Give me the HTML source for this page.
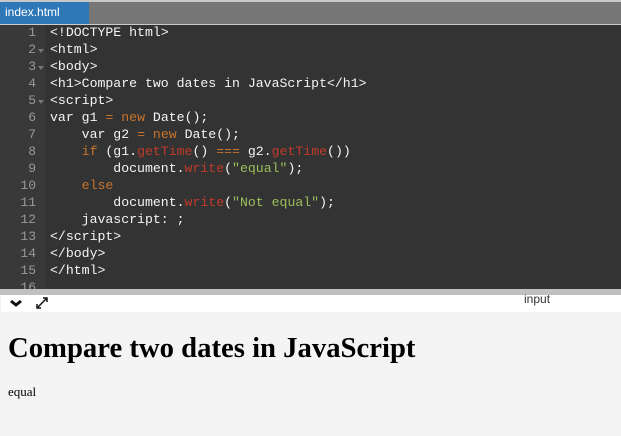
<!DOCTYPE html>
<html><head><style>
body{margin:0;width:621px;height:436px;overflow:hidden;background:#f4f4f4;font-family:"Liberation Serif",serif;position:relative}
.tabs{position:absolute;top:0;left:0;width:621px;height:24px;background:#777;border-top:2px solid #c8c8c8;box-sizing:border-box}
.tab{position:absolute;left:0;top:0;width:89px;height:22px;background:#2f78b8;color:#fff;font:12px "Liberation Sans",sans-serif;line-height:20px;padding-left:5px;box-sizing:border-box}
.ed{position:absolute;top:24px;left:0;width:621px;height:265px;background:#333;border-top:1px solid #ccc;box-sizing:border-box;overflow:hidden}
.gut{position:absolute;left:0;top:0;width:45px;height:100%;background:#393939}
.l{position:absolute;left:0;height:17px;line-height:17px;font:13.2px "Liberation Mono",monospace;white-space:pre;color:#f4f4f4}
.n{position:absolute;left:0;width:36px;text-align:right;color:#999;font-size:13px}
.f{position:absolute;left:38px;top:7px;width:0;height:0;border-left:3px solid transparent;border-right:3px solid transparent;border-top:4px solid #777}
.c{position:absolute;left:50px}
.o{color:#c8742c}.r{color:#c23a2a}.g{color:#9bbf5c}
.bar{position:absolute;top:289px;left:0;width:621px;height:6px;background:#c0c0c0}
.tb{position:absolute;top:295px;left:1px;width:620px;height:17px;background:#fff}
h1{position:absolute;top:332px;left:8px;margin:0;font-size:28.7px;font-weight:bold;color:#000}
.p{position:absolute;top:384px;left:8px;font-size:13px}
</style></head><body>
<div class="tabs"><div class="tab">index.html</div></div>
<div class="ed"><div class="gut"></div>
<div class="l" style="top:0"><span class="n">1</span><span class="c">&lt;!DOCTYPE html&gt;</span></div>
<div class="l" style="top:17px"><span class="n">2</span><span class="f"></span><span class="c">&lt;html&gt;</span></div>
<div class="l" style="top:34px"><span class="n">3</span><span class="f"></span><span class="c">&lt;body&gt;</span></div>
<div class="l" style="top:51px"><span class="n">4</span><span class="c">&lt;h1&gt;Compare two dates in JavaScript&lt;/h1&gt;</span></div>
<div class="l" style="top:68px"><span class="n">5</span><span class="f"></span><span class="c">&lt;script&gt;</span></div>
<div class="l" style="top:85px"><span class="n">6</span><span class="c">var g1 <span class="o">=</span> <span class="o">new</span> Date();</span></div>
<div class="l" style="top:102px"><span class="n">7</span><span class="c">    var g2 <span class="o">=</span> <span class="o">new</span> Date();</span></div>
<div class="l" style="top:119px"><span class="n">8</span><span class="c">    <span class="o">if</span> (g1.<span class="r">getTime</span>() <span class="o">===</span> g2.<span class="r">getTime</span>())</span></div>
<div class="l" style="top:136px"><span class="n">9</span><span class="c">        document.<span class="r">write</span>(<span class="g">"equal"</span>);</span></div>
<div class="l" style="top:153px"><span class="n">10</span><span class="c">    <span class="o">else</span></span></div>
<div class="l" style="top:170px"><span class="n">11</span><span class="c">        document.<span class="r">write</span>(<span class="g">"Not equal"</span>);</span></div>
<div class="l" style="top:187px"><span class="n">12</span><span class="c">    javascript: ;</span></div>
<div class="l" style="top:204px"><span class="n">13</span><span class="c">&lt;/script&gt;</span></div>
<div class="l" style="top:221px"><span class="n">14</span><span class="c">&lt;/body&gt;</span></div>
<div class="l" style="top:238px"><span class="n">15</span><span class="c">&lt;/html&gt;</span></div>
<div class="l" style="top:255px"><span class="n">16</span></div>
</div>
<div class="bar"></div>
<div class="tb">
<svg style="position:absolute;left:8px;top:3px" width="14" height="10"><path d="M2 3l5 4 5-4" stroke="#111" stroke-width="3" fill="none"/></svg>
<svg style="position:absolute;left:34px;top:1px" width="14" height="14"><path d="M3 11l8-8M2 8v4h4M8 2h4v4" stroke="#111" stroke-width="1.5" fill="none"/></svg>
<span style="position:absolute;left:523px;top:-3px;font:12px 'Liberation Sans',sans-serif;color:#333">input</span>
</div>
<h1>Compare two dates in JavaScript</h1>
<div class="p">equal</div>
</body></html>
